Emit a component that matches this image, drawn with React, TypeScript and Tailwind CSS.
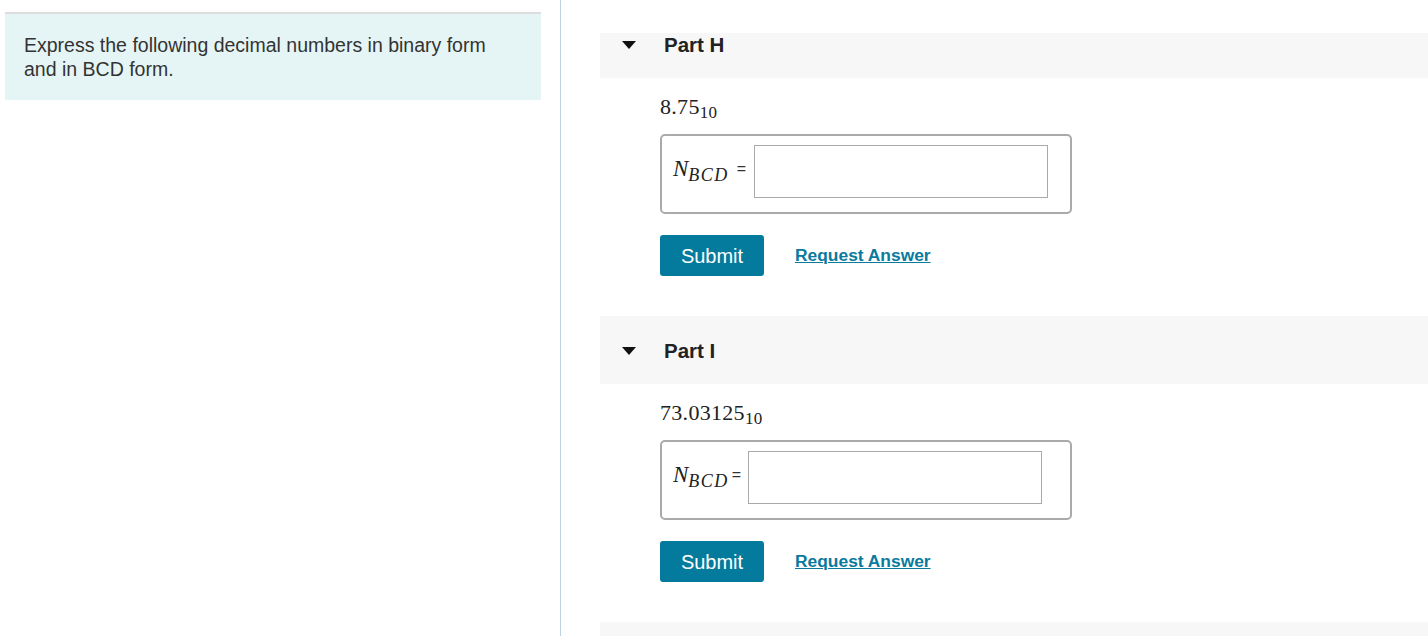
import React from "react";

const sans = { fontFamily: '"Liberation Sans", Arial, sans-serif' };
const serif = { fontFamily: '"Liberation Serif", "Times New Roman", serif' };

function Caret() {
  return (
    <svg width="14" height="8" viewBox="0 0 14 8" className="mt-[8px] shrink-0">
      <path d="M0 0 H14 L7 8 Z" fill="#111" />
    </svg>
  );
}

function PartHeader({ label, cls }: { label: string; cls: string }) {
  return (
    <div className={`flex items-start bg-[#f7f7f7] pl-[22px] ${cls}`}>
      <Caret />
      <span className="ml-[28px] text-[20.5px] font-bold leading-[24px] text-[#222]">{label}</span>
    </div>
  );
}

function Question({
  value,
  eqGap,
  inputLeft,
}: {
  value: string;
  eqGap: string;
  inputLeft: string;
}) {
  return (
    <div className="pl-[60px]">
      <div
        className="mt-[15px] h-[28px] text-[22px] leading-[28px] tracking-[0.3px] text-[#222]"
        style={serif}
      >
        {value}
        <sub className="text-[17px]">10</sub>
      </div>
      <div className="mt-[13px] flex h-[80px] w-[412px] items-start rounded-[5px] border-2 border-[#aaa] pl-[11px] pt-[9px]">
        <span className="mt-[12px] text-[23px] italic leading-[24px] text-[#222]" style={serif}>
          N<sub className="text-[18px] tracking-[1.5px]">BCD</sub>
        </span>
        <span className={`mt-[12px] text-[16px] leading-[24px] text-[#333] ${eqGap}`}>=</span>
        <input
          className={`h-[53px] w-[294px] border border-[#aaa] bg-white outline-none ${inputLeft}`}
        />
      </div>
      <div className="mt-[21px] flex items-center">
        <button className="h-[41px] w-[104px] rounded-[3px] bg-[#047b9c] text-[20px] text-white">
          Submit
        </button>
        <a className="ml-[31px] text-[17.4px] font-bold text-[#0a7a9e] underline" href="#">
          Request Answer
        </a>
      </div>
    </div>
  );
}

export default function App() {
  return (
    <div className="flex h-[636px] w-[1428px] overflow-hidden bg-white" style={sans}>
      <div className="w-[561px] shrink-0 border-r border-[#bfd2e2] pt-3">
        <div className="ml-[5px] w-[536px] border-t-2 border-[#dddddd] bg-[#e5f5f5] px-[19px] py-[19px] text-[19.5px] leading-[24px] text-[#333]">
          Express the following decimal numbers in binary form
          <br />
          and in BCD form.
        </div>
      </div>
      <div className="flex-1 pl-[39px] pt-[33px]">
        <PartHeader label="Part H" cls="h-[45px]" />
        <Question value="8.75" eqGap="ml-[8px]" inputLeft="ml-[8px]" />
        <div className="mt-[40px]">
          <PartHeader label="Part I" cls="h-[68px] pt-[23px]" />
        </div>
        <Question value="73.03125" eqGap="ml-[3px]" inputLeft="ml-[7px]" />
        <div className="mt-[40px] h-[40px] bg-[#f7f7f7]" />
      </div>
    </div>
  );
}
